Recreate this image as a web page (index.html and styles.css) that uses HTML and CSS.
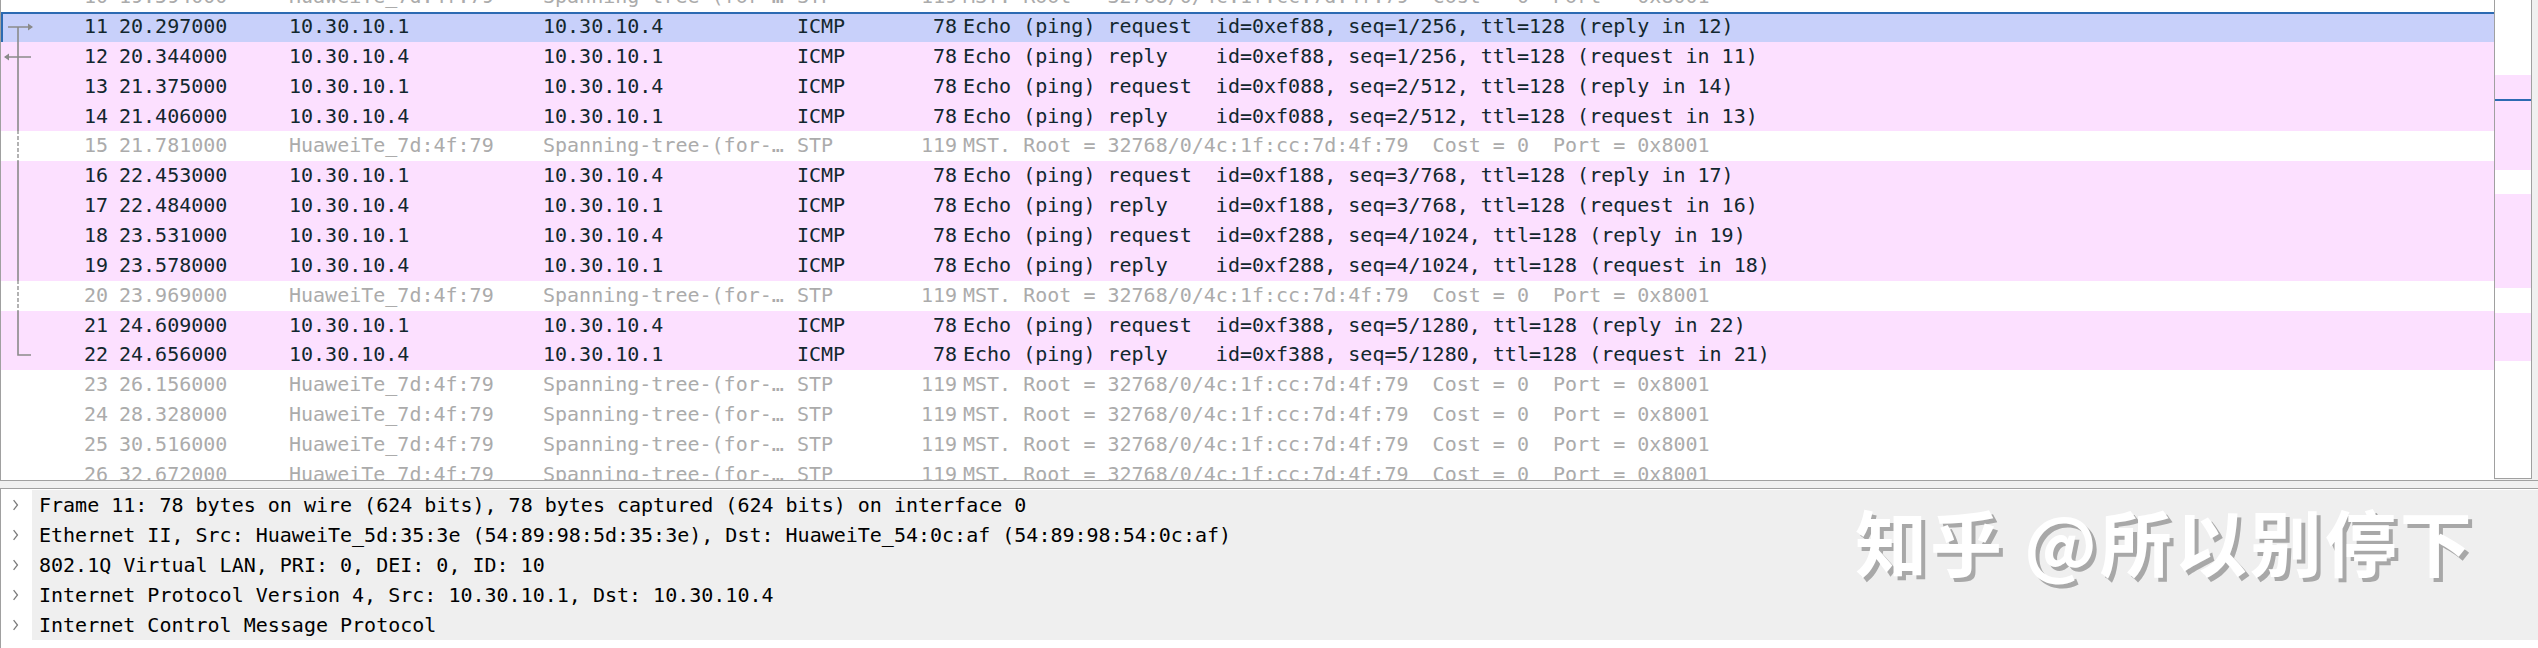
FILE: index.html
```html
<!DOCTYPE html>
<html>
<head>
<meta charset="utf-8">
<link rel="stylesheet" href="styles.css">
</head>
<body>
<div class="list-pane">
  <div class="rows">
    <div class="row stp"><div class="c no"><span class="rel"></span><span>10</span></div><div class="c time">19.594000</div><div class="c src">HuaweiTe_7d:4f:79</div><div class="c dst">Spanning-tree-(for-bridges)_00</div><div class="c proto">STP</div><div class="c len">119</div><div class="c info">MST. Root = 32768/0/4c:1f:cc:7d:4f:79  Cost = 0  Port = 0x8001</div></div>

    <div class="row icmp sel"><div class="c no"><svg class="rel" width="40" height="30" viewBox="0 0 40 30"><path d="M7 15H31M17 15V31" /><path class="head" d="M27 11.5L32 15L27 18.5Z"/></svg><span>11</span></div><div class="c time">20.297000</div><div class="c src">10.30.10.1</div><div class="c dst">10.30.10.4</div><div class="c proto">ICMP</div><div class="c len">78</div><div class="c info">Echo (ping) request  id=0xef88, seq=1/256, ttl=128 (reply in 12)</div></div>

    <div class="row icmp"><div class="c no"><svg class="rel" width="40" height="30" viewBox="0 0 40 30"><path d="M17 -1V31M4 15H30" /><path class="head" d="M8 11.5L3 15L8 18.5Z"/></svg><span>12</span></div><div class="c time">20.344000</div><div class="c src">10.30.10.4</div><div class="c dst">10.30.10.1</div><div class="c proto">ICMP</div><div class="c len">78</div><div class="c info">Echo (ping) reply    id=0xef88, seq=1/256, ttl=128 (request in 11)</div></div>

    <div class="row icmp"><div class="c no"><svg class="rel" width="40" height="30" viewBox="0 0 40 30"><path d="M17 -1V31" /></svg><span>13</span></div><div class="c time">21.375000</div><div class="c src">10.30.10.1</div><div class="c dst">10.30.10.4</div><div class="c proto">ICMP</div><div class="c len">78</div><div class="c info">Echo (ping) request  id=0xf088, seq=2/512, ttl=128 (reply in 14)</div></div>

    <div class="row icmp"><div class="c no"><svg class="rel" width="40" height="30" viewBox="0 0 40 30"><path d="M17 -1V31" /></svg><span>14</span></div><div class="c time">21.406000</div><div class="c src">10.30.10.4</div><div class="c dst">10.30.10.1</div><div class="c proto">ICMP</div><div class="c len">78</div><div class="c info">Echo (ping) reply    id=0xf088, seq=2/512, ttl=128 (request in 13)</div></div>

    <div class="row stp"><div class="c no"><svg class="rel" width="40" height="30" viewBox="0 0 40 30"><path class="dash" d="M17 -1V31" /></svg><span>15</span></div><div class="c time">21.781000</div><div class="c src">HuaweiTe_7d:4f:79</div><div class="c dst">Spanning-tree-(for-bridges)_00</div><div class="c proto">STP</div><div class="c len">119</div><div class="c info">MST. Root = 32768/0/4c:1f:cc:7d:4f:79  Cost = 0  Port = 0x8001</div></div>

    <div class="row icmp"><div class="c no"><svg class="rel" width="40" height="30" viewBox="0 0 40 30"><path d="M17 -1V31" /></svg><span>16</span></div><div class="c time">22.453000</div><div class="c src">10.30.10.1</div><div class="c dst">10.30.10.4</div><div class="c proto">ICMP</div><div class="c len">78</div><div class="c info">Echo (ping) request  id=0xf188, seq=3/768, ttl=128 (reply in 17)</div></div>

    <div class="row icmp"><div class="c no"><svg class="rel" width="40" height="30" viewBox="0 0 40 30"><path d="M17 -1V31" /></svg><span>17</span></div><div class="c time">22.484000</div><div class="c src">10.30.10.4</div><div class="c dst">10.30.10.1</div><div class="c proto">ICMP</div><div class="c len">78</div><div class="c info">Echo (ping) reply    id=0xf188, seq=3/768, ttl=128 (request in 16)</div></div>

    <div class="row icmp"><div class="c no"><svg class="rel" width="40" height="30" viewBox="0 0 40 30"><path d="M17 -1V31" /></svg><span>18</span></div><div class="c time">23.531000</div><div class="c src">10.30.10.1</div><div class="c dst">10.30.10.4</div><div class="c proto">ICMP</div><div class="c len">78</div><div class="c info">Echo (ping) request  id=0xf288, seq=4/1024, ttl=128 (reply in 19)</div></div>

    <div class="row icmp"><div class="c no"><svg class="rel" width="40" height="30" viewBox="0 0 40 30"><path d="M17 -1V31" /></svg><span>19</span></div><div class="c time">23.578000</div><div class="c src">10.30.10.4</div><div class="c dst">10.30.10.1</div><div class="c proto">ICMP</div><div class="c len">78</div><div class="c info">Echo (ping) reply    id=0xf288, seq=4/1024, ttl=128 (request in 18)</div></div>

    <div class="row stp"><div class="c no"><svg class="rel" width="40" height="30" viewBox="0 0 40 30"><path class="dash" d="M17 -1V31" /></svg><span>20</span></div><div class="c time">23.969000</div><div class="c src">HuaweiTe_7d:4f:79</div><div class="c dst">Spanning-tree-(for-bridges)_00</div><div class="c proto">STP</div><div class="c len">119</div><div class="c info">MST. Root = 32768/0/4c:1f:cc:7d:4f:79  Cost = 0  Port = 0x8001</div></div>

    <div class="row icmp"><div class="c no"><svg class="rel" width="40" height="30" viewBox="0 0 40 30"><path d="M17 -1V31" /></svg><span>21</span></div><div class="c time">24.609000</div><div class="c src">10.30.10.1</div><div class="c dst">10.30.10.4</div><div class="c proto">ICMP</div><div class="c len">78</div><div class="c info">Echo (ping) request  id=0xf388, seq=5/1280, ttl=128 (reply in 22)</div></div>

    <div class="row icmp"><div class="c no"><svg class="rel" width="40" height="30" viewBox="0 0 40 30"><path d="M17 -1V15H30" /></svg><span>22</span></div><div class="c time">24.656000</div><div class="c src">10.30.10.4</div><div class="c dst">10.30.10.1</div><div class="c proto">ICMP</div><div class="c len">78</div><div class="c info">Echo (ping) reply    id=0xf388, seq=5/1280, ttl=128 (request in 21)</div></div>

    <div class="row stp"><div class="c no"><span class="rel"></span><span>23</span></div><div class="c time">26.156000</div><div class="c src">HuaweiTe_7d:4f:79</div><div class="c dst">Spanning-tree-(for-bridges)_00</div><div class="c proto">STP</div><div class="c len">119</div><div class="c info">MST. Root = 32768/0/4c:1f:cc:7d:4f:79  Cost = 0  Port = 0x8001</div></div>

    <div class="row stp"><div class="c no"><span class="rel"></span><span>24</span></div><div class="c time">28.328000</div><div class="c src">HuaweiTe_7d:4f:79</div><div class="c dst">Spanning-tree-(for-bridges)_00</div><div class="c proto">STP</div><div class="c len">119</div><div class="c info">MST. Root = 32768/0/4c:1f:cc:7d:4f:79  Cost = 0  Port = 0x8001</div></div>

    <div class="row stp"><div class="c no"><span class="rel"></span><span>25</span></div><div class="c time">30.516000</div><div class="c src">HuaweiTe_7d:4f:79</div><div class="c dst">Spanning-tree-(for-bridges)_00</div><div class="c proto">STP</div><div class="c len">119</div><div class="c info">MST. Root = 32768/0/4c:1f:cc:7d:4f:79  Cost = 0  Port = 0x8001</div></div>

    <div class="row stp"><div class="c no"><span class="rel"></span><span>26</span></div><div class="c time">32.672000</div><div class="c src">HuaweiTe_7d:4f:79</div><div class="c dst">Spanning-tree-(for-bridges)_00</div><div class="c proto">STP</div><div class="c len">119</div><div class="c info">MST. Root = 32768/0/4c:1f:cc:7d:4f:79  Cost = 0  Port = 0x8001</div></div>
  </div>
  <div class="minimap">
    <div class="mm-w" style="height:75px"></div>
    <div class="mm-p" style="height:95px"><div class="mm-cur"></div></div>
    <div class="mm-w" style="height:24px"></div>
    <div class="mm-p" style="height:94px"></div>
    <div class="mm-w" style="height:25px"></div>
    <div class="mm-p" style="height:48px"></div>
    <div class="mm-w mm-rest"></div>
  </div>
  <div class="list-edge"></div>
</div>

<div class="splitter"></div>

<div class="detail-pane">
  <div class="drow"><svg class="exp" width="32" height="30" viewBox="0 0 32 30"><path d="M13 10L17 15L13 20"/></svg><div class="dtext">Frame 11: 78 bytes on wire (624 bits), 78 bytes captured (624 bits) on interface 0</div></div>
  <div class="drow"><svg class="exp" width="32" height="30" viewBox="0 0 32 30"><path d="M13 10L17 15L13 20"/></svg><div class="dtext">Ethernet II, Src: HuaweiTe_5d:35:3e (54:89:98:5d:35:3e), Dst: HuaweiTe_54:0c:af (54:89:98:54:0c:af)</div></div>
  <div class="drow"><svg class="exp" width="32" height="30" viewBox="0 0 32 30"><path d="M13 10L17 15L13 20"/></svg><div class="dtext">802.1Q Virtual LAN, PRI: 0, DEI: 0, ID: 10</div></div>
  <div class="drow"><svg class="exp" width="32" height="30" viewBox="0 0 32 30"><path d="M13 10L17 15L13 20"/></svg><div class="dtext">Internet Protocol Version 4, Src: 10.30.10.1, Dst: 10.30.10.4</div></div>
  <div class="drow"><svg class="exp" width="32" height="30" viewBox="0 0 32 30"><path d="M13 10L17 15L13 20"/></svg><div class="dtext">Internet Control Message Protocol</div></div>
</div>

<div class="watermark">知乎 @所以别停下</div>
</body>
</html>
```

FILE: styles.css
```css
html, body {
  margin: 0;
  padding: 0;
}
body {
  width: 2538px;
  height: 648px;
  overflow: hidden;
  background: #f0f0f0;
  font-family: "DejaVu Sans Mono", "Liberation Mono", monospace;
  font-size: 20px;
  position: relative;
}

/* packet list */
.list-pane {
  display: flex;
  height: 480px;
  border-left: 1px solid #a0a0a0;
  border-bottom: 1px solid #a0a0a0;
  background: #f0f0f0;
  overflow: hidden;
}
.rows {
  flex: 0 0 2493px;
  background: #fff;
  margin-top: -17.87px;
  overflow: hidden;
}
.row {
  display: flex;
  height: 29.87px;
  line-height: 29.87px;
  white-space: pre;
  color: #12272e;
}
.row.icmp { background: #fce0ff; }
.row.stp { background: #fff; color: #ababab; }
.row.sel {
  background: #c8d0fa;
  box-shadow: inset 0 2px 0 #2c6ab2, inset 2px 0 0 #2c6ab2;
}
.c {
  overflow: hidden;
  text-overflow: ellipsis;
  white-space: pre;
  box-sizing: border-box;
  flex: 0 0 auto;
}
.no {
  width: 112px;
  padding-right: 5px;
  display: flex;
  justify-content: space-between;
  align-items: center;
}
.rel {
  width: 40px;
  height: 30px;
  overflow: visible;
  flex: 0 0 40px;
}
.rel path {
  fill: none;
  stroke: #8a8a8a;
  stroke-width: 1.6;
}
.rel path.head {
  fill: #8a8a8a;
  stroke: none;
}
.rel path.dash {
  stroke: #a0a0a0;
  stroke-dasharray: 4 2;
}
.time { width: 170px; padding-left: 6px; }
.src { width: 254px; padding-left: 6px; }
.dst { width: 254px; padding-left: 6px; padding-right: 6px; }
.proto { width: 106px; padding-left: 6px; }
.len { width: 60px; text-align: right; }
.info { flex: 1 1 auto; padding-left: 6px; }

/* intelligent scrollbar */
.minimap {
  flex: 0 0 36px;
  border-left: 1px solid #a0a0a0;
  border-right: 1px solid #a0a0a0;
  border-bottom: 1px solid #a0a0a0;
  height: 478px;
  background: #fff;
  display: flex;
  flex-direction: column;
}
.mm-w { background: #fff; flex: 0 0 auto; }
.mm-p { background: #fce0ff; flex: 0 0 auto; position: relative; }
.mm-rest { flex: 1 1 auto; }
.mm-cur {
  position: absolute;
  left: 0;
  right: 0;
  top: 24px;
  height: 2px;
  background: #2c6ab2;
}
.list-edge { flex: 1 1 auto; }

.splitter {
  height: 7px;
  border-bottom: 1px solid #a0a0a0;
}

/* packet details */
.detail-pane {
  height: 159px;
  background: #fff;
  border-left: 1px solid #a0a0a0;
  padding-top: 1px;
  box-sizing: border-box;
}
.drow {
  display: flex;
  height: 30px;
  line-height: 30px;
  color: #000;
}
.exp {
  flex: 0 0 31px;
  background: #fff;
}
.exp path {
  fill: none;
  stroke: #7a7a7a;
  stroke-width: 1.3;
}
.dtext {
  flex: 1 1 auto;
  background: #efefef;
  padding-left: 7px;
  white-space: pre;
}

.watermark {
  position: absolute;
  left: 1855px;
  top: 495px;
  font-family: "Noto Sans CJK SC", sans-serif;
  font-size: 72px;
  font-weight: 700;
  line-height: 90px;
  letter-spacing: 3px;
  color: #ffffff;
  text-shadow: 4px 4px 0 #a8a8a8;
  white-space: pre;
}
```
